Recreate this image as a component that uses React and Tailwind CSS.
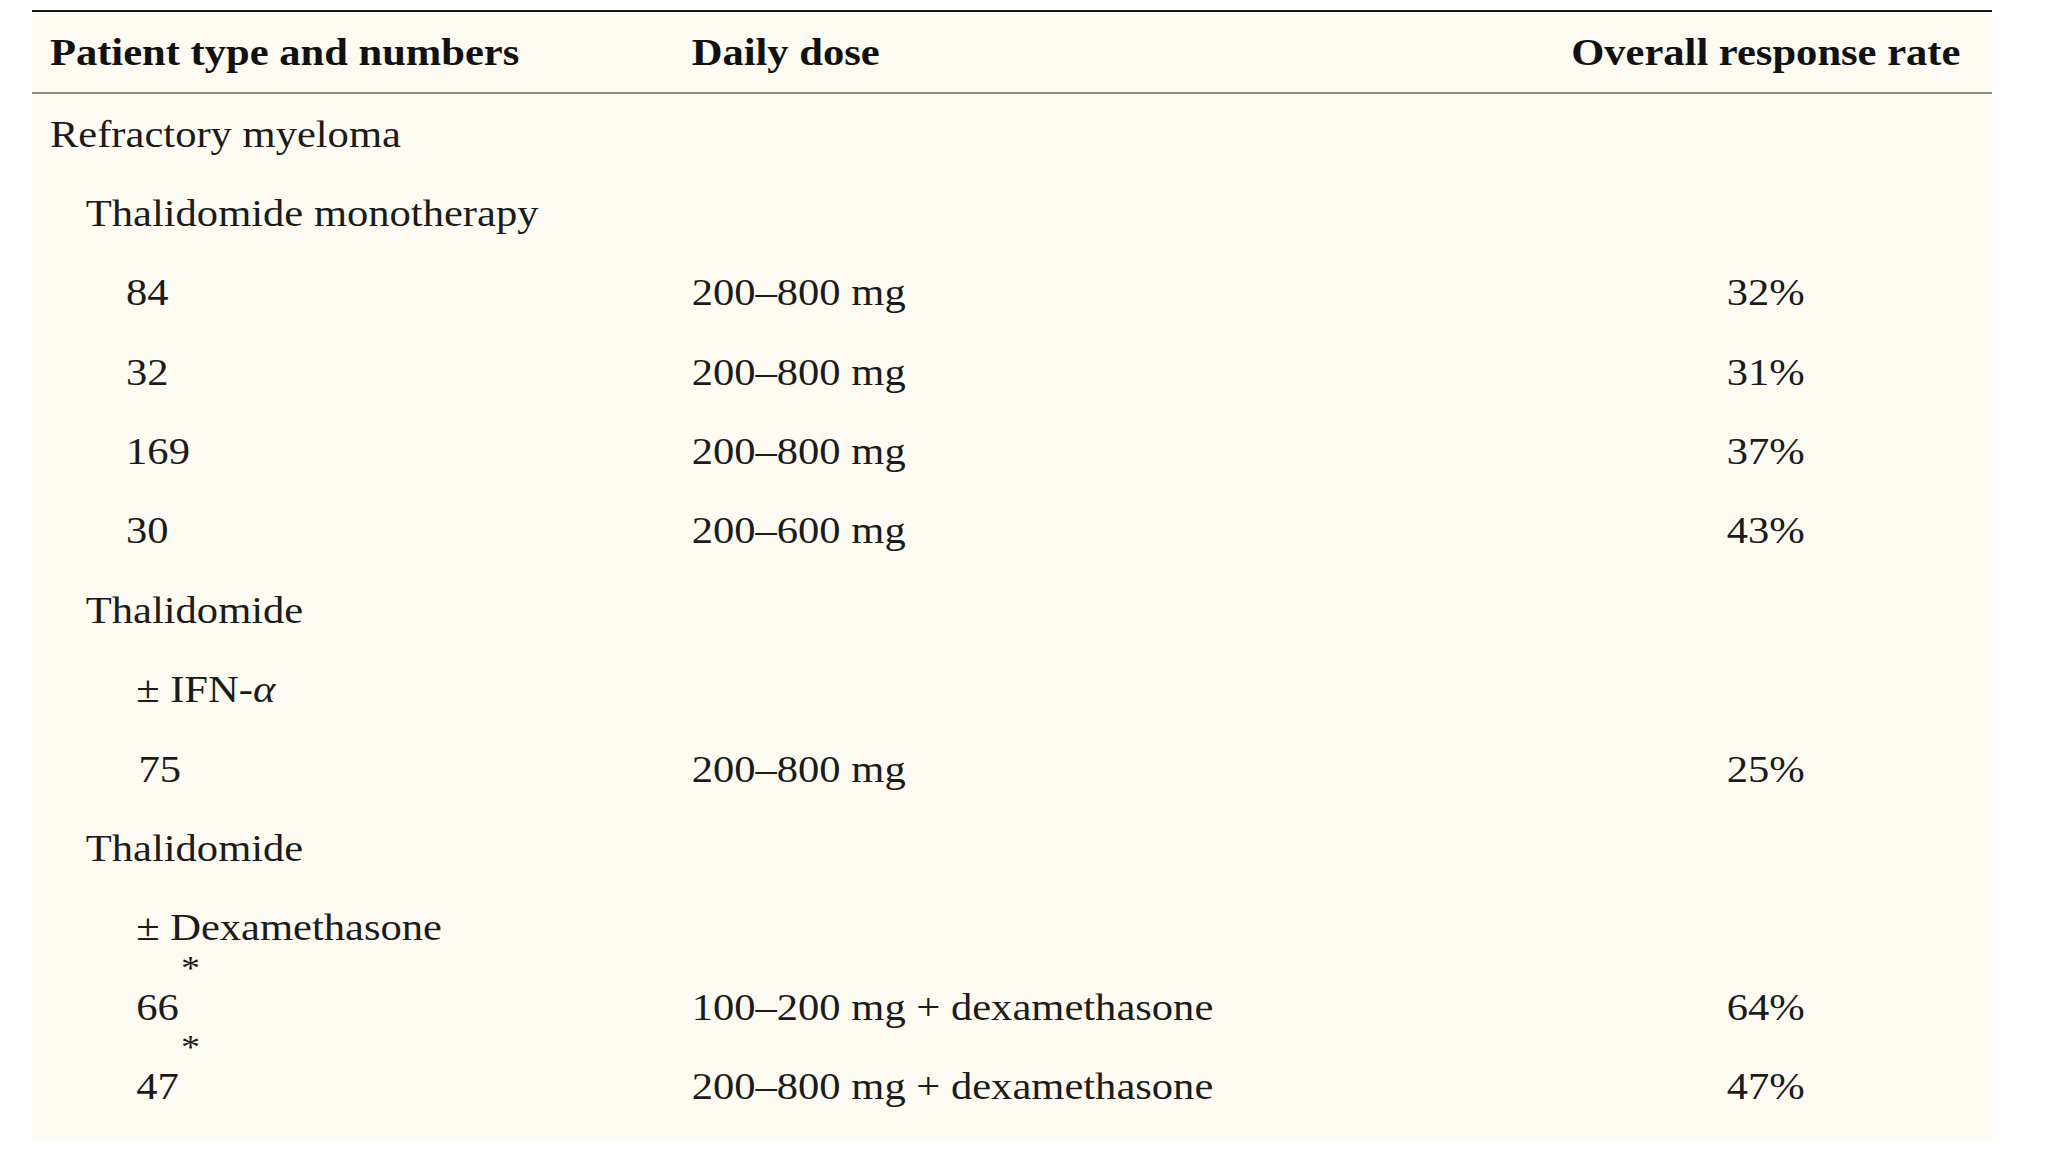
import React from "react";

const rows = [
  { c1: "Refractory myeloma", pad: "pl-[16px]" },
  { c1: "Thalidomide monotherapy", pad: "pl-[48px]" },
  { c1: "84", pad: "pl-[84px]", c2: "200–800 mg", c3: "32%" },
  { c1: "32", pad: "pl-[84px]", c2: "200–800 mg", c3: "31%" },
  { c1: "169", pad: "pl-[84px]", c2: "200–800 mg", c3: "37%" },
  { c1: "30", pad: "pl-[84px]", c2: "200–600 mg", c3: "43%" },
  { c1: "Thalidomide", pad: "pl-[48px]" },
  { c1: "ifn", pad: "pl-[93px]" },
  { c1: "75", pad: "pl-[95px]", c2: "200–800 mg", c3: "25%" },
  { c1: "Thalidomide", pad: "pl-[48px]" },
  { c1: "± Dexamethasone", pad: "pl-[93px]" },
  { c1: "66", pad: "pl-[93px]", star: true, c2: "100–200 mg + dexamethasone", c3: "64%" },
  { c1: "47", pad: "pl-[93px]", star: true, c2: "200–800 mg + dexamethasone", c3: "47%" },
];

function FirstCell({ row }) {
  if (row.c1 === "ifn") {
    return (
      <span>
        ± IFN-<span className="italic">α</span>
      </span>
    );
  }
  if (row.star) {
    return (
      <span className="relative">
        {row.c1}
        <span className="absolute left-full top-[-37px] ml-[2px] text-[34px] leading-none">*</span>
      </span>
    );
  }
  return <span>{row.c1}</span>;
}

export default function App() {
  return (
    <div className="w-[2048px] min-h-[1152px] bg-white pt-[10px] font-['Liberation_Serif','Times_New_Roman',serif] text-[#1b1b1b]">
      <div className="ml-[32px] w-[1750px] origin-left scale-x-[1.12] bg-[#fcfaf1] pb-[15px]">
        <div className="h-[2px] bg-[#161616]" />
        <div className="grid h-[80px] grid-cols-[589px_1fr_376px] items-center text-[38px] font-bold leading-none text-[#111111]">
          <div className="pl-[16px]">Patient type and numbers</div>
          <div>Daily dose</div>
          <div className="pr-[28px] text-center">Overall response rate</div>
        </div>
        <div className="h-[2px] bg-[#8b8b84]" />
        <div className="flex flex-col">
          {rows.map((row, i) => (
            <div
              key={i}
              className="grid h-[79.36px] grid-cols-[589px_1fr_376px] items-center text-[38px] leading-none"
            >
              <div className={`flex items-center ${row.pad}`}>
                <FirstCell row={row} />
              </div>
              <div>{row.c2 || ""}</div>
              <div className="pr-[28px] text-center">{row.c3 || ""}</div>
            </div>
          ))}
        </div>
      </div>
    </div>
  );
}
